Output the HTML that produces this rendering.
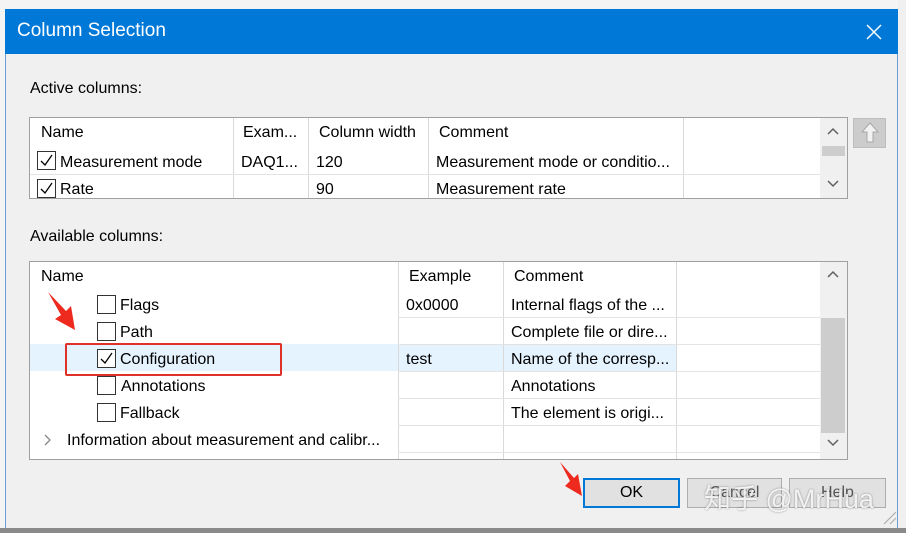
<!DOCTYPE html>
<html><head><meta charset="utf-8"><style>
*{margin:0;padding:0;box-sizing:border-box}
body{width:906px;height:533px;overflow:hidden;background:#f4f4f4;font-family:"Liberation Sans","Noto Sans CJK SC",sans-serif;font-size:16px;color:#000;position:relative}
.a{position:absolute}
.t{position:absolute;white-space:nowrap}
.cb{position:absolute;width:19px;height:19px;border:1px solid #333;background:#fff}
.vl{position:absolute;width:1px;background:#d9d9d9}
.hl{position:absolute;height:1px;background:#e3e3e3}
.btn{position:absolute;height:30px;border:1px solid #adadad;background:#e1e1e1;text-align:center;line-height:28px}
</style></head><body>
<div class="a" style="left:898px;top:0;width:8px;height:533px;background:#f0f0f0"></div>
<div class="a" style="left:5px;top:9px;width:893px;height:520px;background:#f0f0f0;border:1px solid #6a9fd4;border-bottom:none"></div>
<div class="a" style="left:0;top:528px;width:906px;height:5px;background:#8a8a8a"></div>
<div class="a" style="left:5px;top:9px;width:893px;height:45px;background:#0078d7"></div>
<div class="t" style="left:17px;top:20px;color:#fff;font-size:19px">Column Selection</div>
<svg class="a" style="left:866px;top:24px" width="16" height="16"><path d="M1 1L15 15M15 1L1 15" stroke="#fff" stroke-width="1.5"/></svg>
<div class="t" style="left:30px;top:80px">Active columns:</div>
<div class="a" style="left:29px;top:117px;width:819px;height:82px;background:#fff;border:1px solid #a0a0a0"></div>
<div class="vl" style="left:233px;top:118px;height:80px"></div>
<div class="vl" style="left:308px;top:118px;height:80px"></div>
<div class="vl" style="left:428px;top:118px;height:80px"></div>
<div class="vl" style="left:683px;top:118px;height:80px"></div>
<div class="hl" style="left:30px;top:174px;width:790px"></div>
<div class="t" style="left:41px;top:124px">Name</div>
<div class="t" style="left:243px;top:124px">Exam...</div>
<div class="t" style="left:319px;top:124px">Column width</div>
<div class="t" style="left:439px;top:124px">Comment</div>
<div class="cb" style="left:37px;top:151px"></div>
<svg class="a" style="left:37px;top:151px" width="19" height="19"><path d="M4 10L8 14L15 4" stroke="#000" stroke-width="1.3" fill="none"/></svg>
<div class="t" style="left:60px;top:154px">Measurement mode</div>
<div class="t" style="left:241px;top:154px">DAQ1...</div>
<div class="t" style="left:316px;top:154px">120</div>
<div class="t" style="left:436px;top:154px">Measurement mode or conditio...</div>
<div class="cb" style="left:37px;top:179px"></div>
<svg class="a" style="left:37px;top:179px" width="19" height="19"><path d="M4 10L8 14L15 4" stroke="#000" stroke-width="1.3" fill="none"/></svg>
<div class="t" style="left:60px;top:181px">Rate</div>
<div class="t" style="left:316px;top:181px">90</div>
<div class="t" style="left:436px;top:181px">Measurement rate</div>
<div class="a" style="left:820px;top:118px;width:27px;height:80px;background:#f0f0f0"></div>
<div class="a" style="left:822px;top:146px;width:23px;height:10px;background:#cdcdcd"></div>
<svg class="a" style="left:826px;top:126px" width="14" height="10"><path d="M2 8L7 3L12 8" stroke="#606060" stroke-width="1.5" fill="none"/></svg>
<svg class="a" style="left:826px;top:179px" width="14" height="10"><path d="M2 2L7 7L12 2" stroke="#606060" stroke-width="1.5" fill="none"/></svg>
<div class="a" style="left:853px;top:118px;width:33px;height:30px;background:#cccccc;border:1px solid #bdbdbd"></div>
<svg class="a" style="left:859px;top:121px" width="22" height="24"><path d="M11 2L19 11H14V21H8V11H3Z" fill="#f2f2f2" stroke="#a8a8a8"/></svg>
<div class="t" style="left:30px;top:228px">Available columns:</div>
<div class="a" style="left:29px;top:261px;width:819px;height:199px;background:#fff;border:1px solid #a0a0a0"></div>
<div class="a" style="left:30px;top:344px;width:646px;height:27px;background:#e5f3ff"></div>
<div class="vl" style="left:398px;top:262px;height:197px"></div>
<div class="vl" style="left:503px;top:262px;height:197px"></div>
<div class="vl" style="left:676px;top:262px;height:197px"></div>
<div class="hl" style="left:398px;top:317px;width:422px"></div>
<div class="hl" style="left:398px;top:344px;width:422px"></div>
<div class="hl" style="left:398px;top:371px;width:422px"></div>
<div class="hl" style="left:398px;top:398px;width:422px"></div>
<div class="hl" style="left:398px;top:425px;width:422px"></div>
<div class="hl" style="left:398px;top:452px;width:422px"></div>
<div class="t" style="left:41px;top:268px">Name</div>
<div class="t" style="left:409px;top:268px">Example</div>
<div class="t" style="left:514px;top:268px">Comment</div>
<div class="cb" style="left:97px;top:295px"></div><div class="t" style="left:120px;top:297px">Flags</div>
<div class="t" style="left:406px;top:297px">0x0000</div><div class="t" style="left:511px;top:297px">Internal flags of the ...</div>
<div class="cb" style="left:97px;top:322px"></div><div class="t" style="left:120px;top:324px">Path</div>
<div class="t" style="left:511px;top:324px">Complete file or dire...</div>
<div class="cb" style="left:97px;top:349px"></div>
<svg class="a" style="left:97px;top:349px" width="19" height="19"><path d="M4 10L8 14L15 4" stroke="#000" stroke-width="1.3" fill="none"/></svg>
<div class="t" style="left:120px;top:351px">Configuration</div>
<div class="t" style="left:406px;top:351px">test</div><div class="t" style="left:511px;top:351px">Name of the corresp...</div>
<div class="cb" style="left:97px;top:376px"></div><div class="t" style="left:121px;top:378px">Annotations</div>
<div class="t" style="left:511px;top:378px">Annotations</div>
<div class="cb" style="left:97px;top:403px"></div><div class="t" style="left:120px;top:405px">Fallback</div>
<div class="t" style="left:511px;top:405px">The element is origi...</div>
<svg class="a" style="left:43px;top:433px" width="10" height="14"><path d="M2 2L7 7L2 12" stroke="#888" stroke-width="1.3" fill="none"/></svg>
<div class="t" style="left:67px;top:432px">Information about measurement and calibr...</div>
<div class="a" style="left:65px;top:343px;width:217px;height:33px;border:2px solid #e0302a;border-radius:2px"></div>
<div class="a" style="left:820px;top:262px;width:27px;height:197px;background:#f0f0f0"></div>
<div class="a" style="left:821px;top:318px;width:24px;height:115px;background:#cdcdcd"></div>
<svg class="a" style="left:826px;top:269px" width="14" height="10"><path d="M2 8L7 3L12 8" stroke="#606060" stroke-width="1.5" fill="none"/></svg>
<svg class="a" style="left:826px;top:438px" width="14" height="10"><path d="M2 2L7 7L12 2" stroke="#606060" stroke-width="1.5" fill="none"/></svg>
<svg class="a" style="left:45px;top:290px" width="35" height="45"><path d="M3 2L21 21L26 16L30 40L10 29L16 25Z" fill="#ee2a1f"/></svg>
<svg class="a" style="left:558px;top:460px" width="30" height="40"><path d="M2 2L16 18L20 14L24 36L7 26L12 21Z" fill="#ee2a1f"/></svg>
<div class="btn" style="left:583px;top:478px;width:97px;border:2px solid #0078d7;line-height:26px">OK</div>
<div class="btn" style="left:687px;top:478px;width:95px;color:#555">Cancel</div>
<div class="btn" style="left:789px;top:478px;width:97px;color:#555">Help</div>
<div class="t" style="left:704px;top:477px;font-size:27px;color:rgba(255,255,255,0.85);text-shadow:0 0 2px rgba(0,0,0,0.4)">知乎 @MrHua</div>
<svg class="a" style="left:880px;top:508px" width="18" height="20"><path d="M16 4L4 16M16 10L10 16" stroke="#aaa"/></svg>
</body></html>
